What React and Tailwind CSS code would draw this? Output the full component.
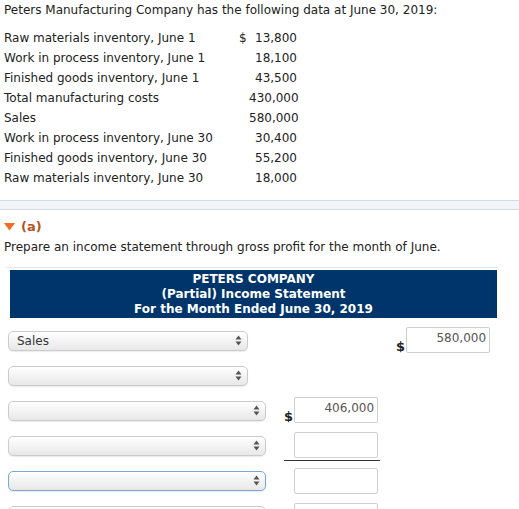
import React from "react";

const data = [
  ["Raw materials inventory, June 1", "$", "13,800"],
  ["Work in process inventory, June 1", "", "18,100"],
  ["Finished goods inventory, June 1", "", "43,500"],
  ["Total manufacturing costs", "", "430,000"],
  ["Sales", "", "580,000"],
  ["Work in process inventory, June 30", "", "30,400"],
  ["Finished goods inventory, June 30", "", "55,200"],
  ["Raw materials inventory, June 30", "", "18,000"],
];

function Arrows() {
  return (
    <svg width="7" height="11" viewBox="0 0 7 11" className="shrink-0">
      <path d="M3.5 0.5 L6.5 4.5 L0.5 4.5 Z" fill="#555" />
      <path d="M3.5 10.5 L6.5 6.5 L0.5 6.5 Z" fill="#555" />
    </svg>
  );
}

function Select({ value, wide, focused }) {
  return (
    <div
      className={`flex h-[20px] shrink-0 items-center justify-between rounded-[5px] border bg-gradient-to-b from-white to-[#e8e8e8] pl-[8px] pr-[5px] shadow-[0_1px_1px_rgba(0,0,0,0.08)] ${
        wide ? "w-[258px]" : "w-[240px]"
      } ${focused ? "border-[#7aa7d8]" : "border-[#cbcbcb]"}`}
    >
      <span className="text-[12px] text-[#333]">{value}</span>
      <Arrows />
    </div>
  );
}

function Input({ value }) {
  return (
    <div className="flex h-[26px] w-[84px] items-start justify-end rounded-[2px] border border-[#cfcfcf] bg-white px-[3px] pt-[3px] text-[12px] leading-[15px] text-[#555]">
      {value}
    </div>
  );
}

export default function App() {
  return (
    <div className="h-[509px] w-[519px] overflow-hidden bg-white font-['DejaVu_Sans',Verdana,sans-serif] text-[12px] text-[#222]">
      <p className="px-[4px] pt-[2px] leading-[16px]">
        Peters Manufacturing Company has the following data at June 30, 2019:
      </p>
      <div className="mt-[10px] w-[297px] pl-[4px]">
        {data.map(([label, sign, val]) => (
          <div key={label} className="flex h-[20px] items-center">
            <span className="flex-1 whitespace-nowrap">{label}</span>
            <span className="w-[10px]">{sign}</span>
            <span className="w-[48px] text-right">{val}</span>
          </div>
        ))}
      </div>

      <div className="mt-[12px] h-[10px] border-y border-[#d3dbe6] bg-[#f1f4f9]" />

      <div className="mt-[9px] flex h-[16px] items-center gap-[6px] pl-[4px]">
        <svg width="11" height="8" viewBox="0 0 11 8">
          <path d="M0 0 L11 0 L5.5 7.5 Z" fill="#f26b21" />
        </svg>
        <span className="text-[13px] font-bold text-[#b5531f]">(a)</span>
      </div>
      <p className="mt-[4px] pl-[4px] leading-[16px]">
        Prepare an income statement through gross profit for the month of June.
      </p>

      <div className="mx-[6px] mt-[12px] w-[492px] border-t border-[#e3e7ee] pt-[2px]">
        <div className="ml-[4px] flex h-[48px] w-[487px] flex-col items-center justify-center bg-[#00356b] text-[12px] leading-[15px] font-bold text-white">
          <span>PETERS COMPANY</span>
          <span>(Partial) Income Statement</span>
          <span>For the Month Ended June 30, 2019</span>
        </div>
      </div>

      <div className="mt-[5px] flex flex-col pl-[8px]">
        <div className="flex h-[35px] items-center">
          <Select value="Sales" />
          <span className="ml-[148px] mt-[12px] text-[13px] font-bold leading-none">$</span>
          <span className="ml-[1px] -mt-[2px]"><Input value="580,000" /></span>
        </div>
        <div className="flex h-[35px] items-center">
          <Select />
        </div>
        <div className="flex h-[35px] items-center">
          <Select wide />
          <span className="ml-[18px] mt-[12px] text-[13px] font-bold leading-none">$</span>
          <span className="ml-[1px] -mt-[2px]"><Input value="406,000" /></span>
        </div>
        <div className="flex h-[35px] items-center">
          <Select wide />
          <div className="ml-[18px] mt-[2px] flex flex-col items-end border-b border-[#333] pb-[2px] pl-[10px] pr-[2px]">
            <Input />
          </div>
        </div>
        <div className="flex h-[35px] items-center">
          <Select wide focused />
          <span className="ml-[28px]"><Input /></span>
        </div>
        <div className="flex h-[35px] items-center">
          <Select wide />
          <span className="ml-[28px]"><Input /></span>
        </div>
      </div>
    </div>
  );
}
